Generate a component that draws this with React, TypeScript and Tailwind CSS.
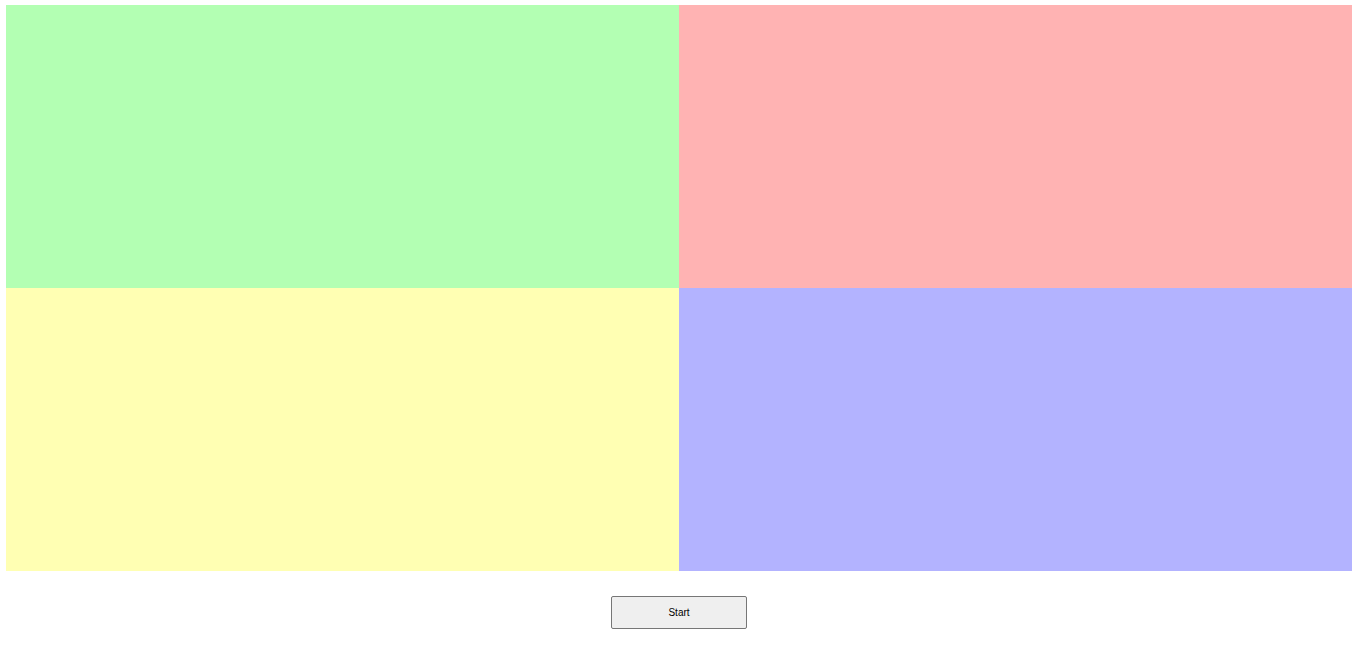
import { useState } from "react";

const pads = [
  { id: "green", className: "bg-[#b3ffb3]" },
  { id: "red", className: "bg-[#ffb3b3]" },
  { id: "yellow", className: "bg-[#ffffb3]" },
  { id: "blue", className: "bg-[#b3b3ff]" },
];

const App = () => {
  const [started, setStarted] = useState(false);

  return (
    <div className="min-h-screen bg-white font-['Liberation_Sans',Arial,sans-serif]">
      <div className="mx-[6px] pt-[5px] grid grid-cols-2">
        {pads.map((pad) => (
          <div key={pad.id} className={`h-[283px] ${pad.className}`} />
        ))}
      </div>
      <div className="flex justify-center mt-[25px]">
        <button
          onClick={() => setStarted(!started)}
          className="w-[136px] h-[33px] bg-[#efefef] border border-[#767676] rounded-[2px] text-[10px] text-black"
        >
          Start
        </button>
      </div>
    </div>
  );
};

export default App;
